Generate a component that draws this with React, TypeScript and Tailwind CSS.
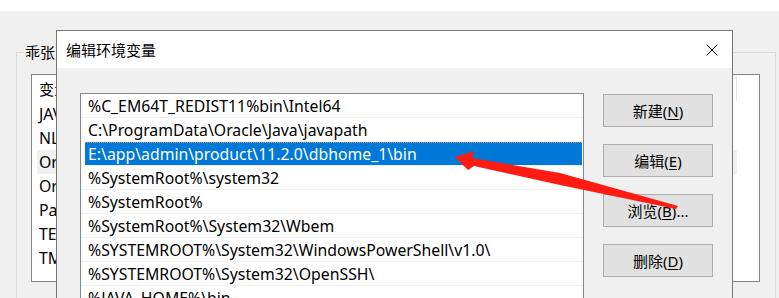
import React from "react";

const paths = [
  "%C_EM64T_REDIST11%bin\\Intel64",
  "C:\\ProgramData\\Oracle\\Java\\javapath",
  "E:\\app\\admin\\product\\11.2.0\\dbhome_1\\bin",
  "%SystemRoot%\\system32",
  "%SystemRoot%",
  "%SystemRoot%\\System32\\Wbem",
  "%SYSTEMROOT%\\System32\\WindowsPowerShell\\v1.0\\",
  "%SYSTEMROOT%\\System32\\OpenSSH\\",
  "%JAVA_HOME%\\bin",
];

const backRows = ["JAVA_HOME", "NLS_LANG", "OracleHome", "OracleSID", "Path", "TEMP", "TMP"];

const buttons: { label: string; key: string; tail?: string }[] = [
  { label: "新建", key: "N" },
  { label: "编辑", key: "E" },
  { label: "浏览", key: "B", tail: "..." },
  { label: "删除", key: "D" },
];

const font = { fontFamily: '"Noto Sans", "Noto Sans CJK SC", sans-serif' };

export default function App() {
  return (
    <div
      className="relative w-[779px] h-[298px] overflow-hidden bg-[#f0f0f0] text-[15px] text-black"
      style={font}
    >
      <div className="h-[11px] bg-white" />
      {/* back window group box */}
      <div className="relative mt-[41px] ml-[16px] w-[760px] h-[260px] border border-[#dcdcdc] pl-[14px] pt-[21px]">
        <div className="absolute left-[7px] top-[-11px] bg-[#f0f0f0] px-[1px] leading-[20px]">乖张</div>
        <div className="w-[729px] h-[208px] border border-[#828790] bg-white pt-[1px] text-[15.8px]">
          <div className="flex h-[26px]">
            <div className="w-[704px] pl-[7px] leading-[26px] text-[15px]">变量</div>
            <div className="w-px h-[25px] bg-[#e5e5e5]" />
          </div>
          {backRows.map((r, i) => (
            <div key={r} className="h-[24px] flex">
              <div
                className={
                  "ml-[5px] w-[700px] pl-[2px] leading-[24px] " + (i === 2 ? "bg-[#f0f0f0]" : "")
                }
              >
                {r}
              </div>
            </div>
          ))}
        </div>
      </div>

      {/* dialog */}
      <div className="absolute left-[56px] top-[30px] w-[677px] h-[310px] border border-[#767676] bg-[#f0f0f0] flex flex-col">
        <div className="shrink-0 h-[37px] bg-white flex items-center justify-between pl-[9px] pr-[14px]">
          <span className="leading-[20px] text-[15px]">编辑环境变量</span>
          <svg width="12" height="12" viewBox="0 0 12 12">
            <path d="M0.5 0.5 L11.5 11.5 M11.5 0.5 L0.5 11.5" stroke="#000" strokeWidth="1" />
          </svg>
        </div>
        <div className="shrink-0 flex pl-[23px] pt-[25px]">
          <div className="w-[504px] h-[240px] border border-[#828790] bg-white overflow-hidden text-[15.8px]">
            {paths.map((p, i) =>
              i === 2 ? (
                <div key={p} className="h-[24px] border-b border-[#f0f0f0] flex">
                  <div className="ml-[4px] mr-[1px] flex-1 bg-[#0078d7] border-t border-dotted border-[#c8a070] text-white pl-[3px] pt-[1px] leading-[21px] whitespace-nowrap">
                    {p}
                  </div>
                </div>
              ) : (
                <div key={p} className="h-[24px] border-b border-[#f0f0f0] pl-[7px] pt-[1px] leading-[22px] whitespace-nowrap">
                  {p}
                </div>
              )
            )}
          </div>
          <div className="ml-[19px] pt-[1px] flex flex-col gap-[17px]">
            {buttons.map((b) => (
              <div
                key={b.key}
                className="w-[110px] h-[33px] border border-[#adadad] bg-[#e1e1e1] flex items-center justify-center leading-[20px]"
              >
                {b.label}(<span className="underline underline-offset-2">{b.key}</span>){b.tail ?? ""}
              </div>
            ))}
          </div>
        </div>
      </div>

      {/* red arrow annotation */}
      <svg className="absolute left-0 top-0" width="779" height="298" viewBox="0 0 779 298">
        <polygon
          points="455,157 474,151 472,158 560,173 678,206 676,209 560,185 474,166 468,170"
          fill="#ff1a12"
        />
      </svg>
    </div>
  );
}
